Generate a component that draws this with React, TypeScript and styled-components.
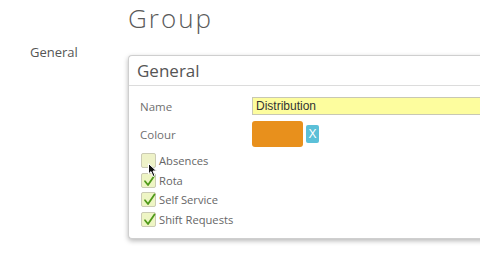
import React from 'react';
import styled, { createGlobalStyle } from 'styled-components';

const Global = createGlobalStyle`
  html, body {
    margin: 0;
    padding: 0;
    background: #fff;
    overflow: hidden;
  }
  body {
    font-family: "Open Sans", "Liberation Sans", sans-serif;
    color: #666;
  }
`;

const Page = styled.div`
  position: relative;
  width: 480px;
  height: 270px;
  overflow: hidden;
`;

const Title = styled.h1`
  margin: 0;
  padding: 2px 0 0 128px;
  font-family: "Open Sans", sans-serif;
  font-weight: 300;
  font-size: 26px;
  line-height: 32px;
  letter-spacing: 2px;
  color: #5a5a5a;
`;

const Section = styled.div`
  display: grid;
  grid-template-columns: 128px 1fr;
  align-items: start;
  margin-top: 4px;
`;

const SideLabel = styled.div`
  padding: 5px 0 0 30px;
  font-size: 13px;
  color: #555;
`;

const Card = styled.div`
  width: 380px;
  margin-top: 17px;
  border: 1px solid #cfcfcf;
  border-right: none;
  border-radius: 4px 0 0 4px;
  box-shadow: 0 2px 5px rgba(0, 0, 0, 0.28);
  background: #fff;
`;

const CardHeader = styled.div`
  height: 29px;
  padding-left: 8px;
  border-bottom: 1px solid #dcdcdc;
  font-size: 17px;
  line-height: 29px;
  color: #555;
`;

const CardBody = styled.div`
  padding: 11px 0 11px 11px;
  display: flex;
  flex-direction: column;
`;

const FieldRow = styled.div<{ $gap?: number }>`
  display: grid;
  grid-template-columns: 112px 1fr;
  align-items: center;
  margin-bottom: ${p => p.$gap ?? 0}px;
`;

const FieldLabel = styled.label`
  font-size: 11.5px;
  color: #707070;
`;

const TextInput = styled.input`
  box-sizing: border-box;
  height: 18px;
  width: 100%;
  padding: 0 3px;
  border: 1px solid #c8c8b4;
  border-right: none;
  background: #fdfd9e;
  font-family: "Liberation Sans", Arial, sans-serif;
  font-size: 12px;
  color: #333;
  outline: none;
`;

const ColourWrap = styled.div`
  display: flex;
  align-items: center;
  gap: 3px;
`;

const Swatch = styled.div<{ $colour: string }>`
  width: 51px;
  height: 26px;
  border-radius: 3px;
  background: ${p => p.$colour};
`;

const ClearButton = styled.button`
  width: 13px;
  height: 18px;
  padding: 0;
  border: none;
  border-radius: 2px;
  background: #5bc0d8;
  color: #fff;
  font-family: "Liberation Sans", Arial, sans-serif;
  font-size: 12px;
  line-height: 18px;
`;

const Checks = styled.div`
  display: flex;
  flex-direction: column;
  gap: 4.5px;
  margin-top: 6px;
  margin-left: 1px;
`;

const CheckRow = styled.div`
  display: flex;
  align-items: center;
  gap: 3px;
  height: 15px;
  font-size: 11.2px;
  color: #666;
`;

const Box = styled.span<{ $checked: boolean }>`
  position: relative;
  box-sizing: border-box;
  width: 15px;
  height: 15px;
  border: 1px solid #cbcbb4;
  border-radius: 2px;
  background: ${p => (p.$checked ? '#eef5c4' : '#eef2c8')};
  svg {
    position: absolute;
    left: 1px;
    top: 0px;
  }
`;

const Cursor = styled.svg`
  position: absolute;
  left: 148px;
  top: 163px;
`;

const perms = [
  { name: 'Absences', on: false },
  { name: 'Rota', on: true },
  { name: 'Self Service', on: true },
  { name: 'Shift Requests', on: true },
];

const Check = () => (
  <svg width="13" height="13" viewBox="0 0 13 13">
    <path d="M2 7.2 L5 11 L11.5 1.5" fill="none" stroke="#4f9a1a" strokeWidth="1.8" strokeLinecap="round" strokeLinejoin="round" />
  </svg>
);

export default function App() {
  return (
    <Page>
      <Global />
      <Title>Group</Title>
      <Section>
        <SideLabel>General</SideLabel>
        <Card>
          <CardHeader>General</CardHeader>
          <CardBody>
            <FieldRow $gap={6}>
              <FieldLabel>Name</FieldLabel>
              <TextInput defaultValue="Distribution" />
            </FieldRow>
            <FieldRow>
              <FieldLabel>Colour</FieldLabel>
              <ColourWrap>
                <Swatch $colour="#e8901c" />
                <ClearButton>X</ClearButton>
              </ColourWrap>
            </FieldRow>
            <Checks>
              {perms.map(p => (
                <CheckRow key={p.name}>
                  <Box $checked={p.on}>{p.on && <Check />}</Box>
                  {p.name}
                </CheckRow>
              ))}
            </Checks>
          </CardBody>
        </Card>
      </Section>
      <Cursor width="10" height="15" viewBox="0 0 10 15">
        <path d="M0.5 0.5 L0.5 11 L3 8.6 L5 13.5 L7 12.6 L5 8 L8.5 8 Z" fill="#111" stroke="#fff" strokeWidth="1" />
      </Cursor>
    </Page>
  );
}
